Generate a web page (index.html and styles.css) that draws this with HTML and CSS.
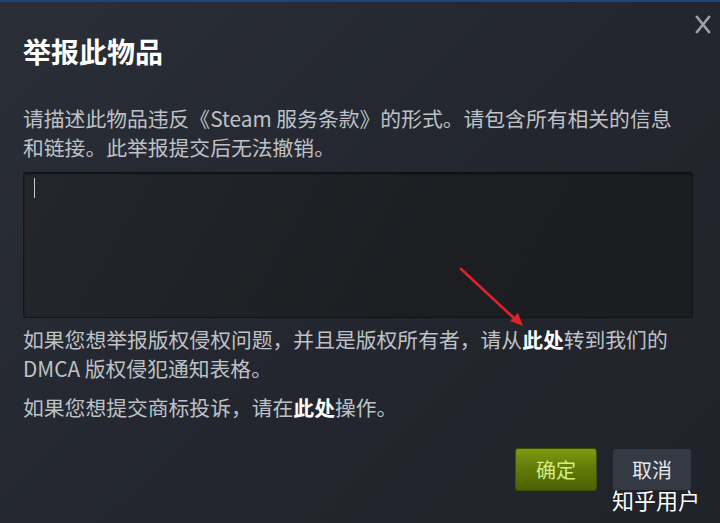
FILE: index.html
```html
<!DOCTYPE html>
<html lang="zh-CN">
<head>
    <meta charset="UTF-8">
    <title>举报此物品</title>
    <link rel="stylesheet" href="styles.css">
</head>
<body>
    <div class="dialog">
        <!-- close button in the corner -->
        <div class="close">
            <svg width="16" height="19" viewBox="0 0 16 19">
                <path d="M2 2 L14 17 M14 2 L2 17" stroke="#9da2a8" stroke-width="2.6" stroke-linecap="square"/>
            </svg>
        </div>

        <h1 class="title">举报此物品</h1>

        <p class="desc">请描述此物品违反《Steam 服务条款》的形式。请包含所有相关的信息和链接。此举报提交后无法撤销。</p>

        <div class="input"><span class="caret"></span></div>

        <p class="note">如果您想举报版权侵权问题，并且是版权所有者，请从<a class="here">此处</a>转到我们的 DMCA 版权侵犯通知表格。</p>
        <p class="note second">如果您想提交商标投诉，请在<a class="here">此处</a>操作。</p>

        <div class="actions">
            <button class="btn ok">确定</button>
            <button class="btn cancel">取消</button>
        </div>

        <!-- red annotation arrow -->
        <svg class="arrow" width="720" height="523" viewBox="0 0 720 523">
            <path d="M461 269 L516 320" stroke="#e0222a" stroke-width="2.6" stroke-linecap="round"/>
            <path d="M523 326 L510 321 L518 313 Z" fill="#e0222a"/>
        </svg>

        <div class="watermark">知乎用户</div>
    </div>
</body>
</html>
```

FILE: styles.css
```css
html, body {
    margin: 0;
    height: 100%;
}

body {
    font-family: "Noto Sans CJK SC", "Noto Sans", sans-serif;
    background-color: #23262d;
    overflow: hidden;
}

.dialog {
    position: relative;
    box-sizing: border-box;
    height: 523px;
    padding: 33px 27px 0 23px;
    border-top: 2px solid #1d4676;
    background: linear-gradient(135deg, #2a2e37 0%, #23262e 55%, #202329 100%);
}

.close {
    position: absolute;
    top: 13px;
    right: 9px;
}

.title {
    margin: 0;
    font-size: 28px;
    line-height: 33px;
    font-weight: 700;
    color: #ffffff;
}

.desc {
    max-width: 660px;
    margin: 36px 0 0;
    font-size: 20.8px;
    line-height: 29px;
    color: #bec2c6;
}

.input {
    position: relative;
    box-sizing: border-box;
    height: 146px;
    margin-top: 10px;
    background: linear-gradient(120deg, #24262c 0%, #1d1e22 60%, #1c1d21 100%);
    border: 1px solid #14161a;
    border-top-color: #0f1013;
    border-radius: 3px;
    box-shadow: inset 0 1px 2px rgba(0, 0, 0, 0.5);
}

.caret {
    position: absolute;
    left: 10px;
    top: 5px;
    width: 1px;
    height: 20px;
    background-color: #c8cbce;
}

.note {
    margin: 7px 0 0;
    font-size: 20.8px;
    line-height: 29px;
    color: #bec2c6;
}

.note.second {
    margin-top: 10px;
}

.here {
    color: #ffffff;
    font-weight: 700;
}

.actions {
    display: flex;
    justify-content: flex-end;
    gap: 17px;
    margin-top: 27px;
    padding-right: 2px;
}

.btn {
    height: 41px;
    border: none;
    border-radius: 2px;
    font-family: inherit;
    font-size: 20px;
    padding: 0;
}

.ok {
    width: 80px;
    color: #d4ec82;
    background: linear-gradient(to bottom, #7d9a0f 0%, #5f7a08 50%, #4b6104 100%);
    box-shadow: 0 0 0 1px #3d4e06;
}

.cancel {
    width: 78px;
    color: #e6e8ea;
    background-color: #343944;
}

.arrow {
    position: absolute;
    left: 0;
    top: -2px;
    pointer-events: none;
}

.watermark {
    position: absolute;
    left: 612px;
    top: 482px;
    font-size: 22px;
    line-height: 30px;
    color: #ffffff;
    text-shadow: 0 0 2px rgba(0, 0, 0, 0.4);
}
```
